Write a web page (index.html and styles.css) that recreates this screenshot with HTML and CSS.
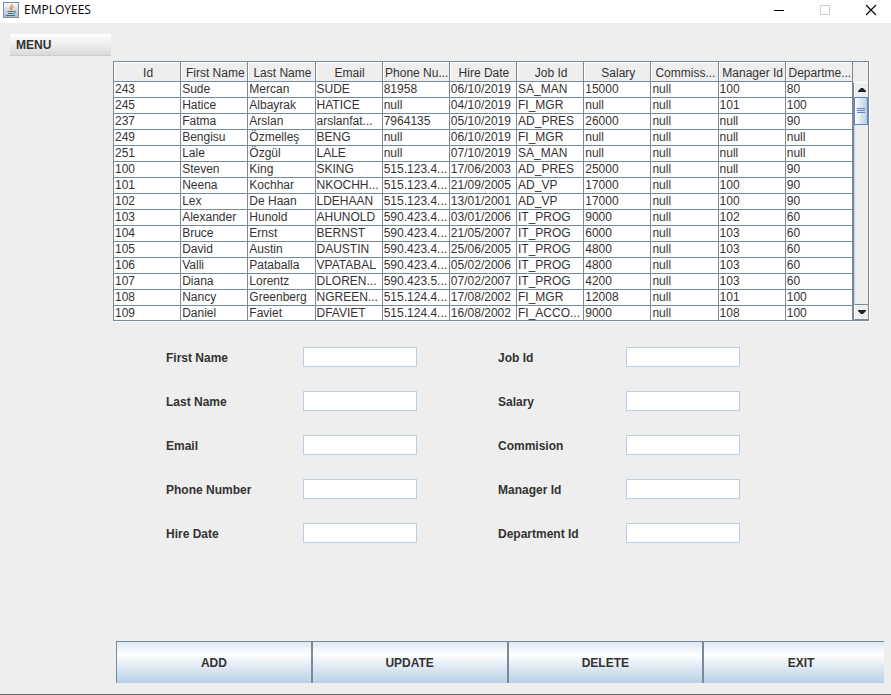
FILE: index.html
```html
<!DOCTYPE html>
<html lang="en">
<head>
<meta charset="utf-8">
<title>EMPLOYEES</title>
<link rel="stylesheet" href="styles.css">
</head>
<body>
<header class="titlebar">
  <svg class="app-icon" width="16" height="16" viewBox="0 0 16 16" aria-hidden="true">
    <defs><linearGradient id="tile" x1="0" y1="0" x2="0" y2="1"><stop offset="0" stop-color="#fafcfd"/><stop offset="1" stop-color="#a9bccb"/></linearGradient></defs>
    <rect x=".5" y=".5" width="15" height="15" fill="url(#tile)" stroke="#7790a5"/>
    <path d="M8.800 2C9.500 4 5.600 5 7.800 8M10.500 4.500C8.500 5.500 8.600 6.500 9 8" fill="none" stroke="#ed8a3a" stroke-width="1.300"/>
    <path d="M4.500 9.500H10.500M5 11.500H10M3 13.500H12M10.500 9.500C13.500 8.500 13 11 10.500 11.500" fill="none" stroke="#41708f"/>
  </svg>
  <h1 class="title">EMPLOYEES</h1>
  <div class="window-controls">
    <button class="window-button" type="button" aria-label="Minimize"><svg width="12" height="12" viewBox="0 0 12 12"><path d="M1 6.500H11" stroke="#000"/></svg></button>
    <button class="window-button" type="button" aria-label="Maximize" disabled><svg width="12" height="12" viewBox="0 0 12 12"><path d="M1.500 1.500H10.500V10.500H1.500Z" fill="none" stroke="#ccc"/></svg></button>
    <button class="window-button" type="button" aria-label="Close"><svg width="12" height="12" viewBox="0 0 12 12"><path d="M1 1L11 11M11 1L1 11" stroke="#000" stroke-width="1.100"/></svg></button>
  </div>
</header>
<main class="content">
  <div class="workspace">
    <nav class="menubar"><button class="menu" type="button">MENU</button></nav>
    <div class="scroll-pane">
      <div class="viewport">
        <table class="employees">
          <thead><tr><th>Id</th><th>First Name</th><th>Last Name</th><th>Email</th><th>Phone Nu...</th><th>Hire Date</th><th>Job Id</th><th>Salary</th><th>Commiss...</th><th>Manager Id</th><th>Departme...</th></tr></thead>
          <tbody>
            <tr><td>243</td><td>Sude</td><td>Mercan</td><td>SUDE</td><td>81958</td><td>06/10/2019</td><td>SA_MAN</td><td>15000</td><td>null</td><td>100</td><td>80</td></tr>
            <tr><td>245</td><td>Hatice</td><td>Albayrak</td><td>HATICE</td><td>null</td><td>04/10/2019</td><td>FI_MGR</td><td>null</td><td>null</td><td>101</td><td>100</td></tr>
            <tr><td>237</td><td>Fatma</td><td>Arslan</td><td>arslanfat...</td><td>7964135</td><td>05/10/2019</td><td>AD_PRES</td><td>26000</td><td>null</td><td>null</td><td>90</td></tr>
            <tr><td>249</td><td>Bengisu</td><td>Özmelleş</td><td>BENG</td><td>null</td><td>06/10/2019</td><td>FI_MGR</td><td>null</td><td>null</td><td>null</td><td>null</td></tr>
            <tr><td>251</td><td>Lale</td><td>Özgül</td><td>LALE</td><td>null</td><td>07/10/2019</td><td>SA_MAN</td><td>null</td><td>null</td><td>null</td><td>null</td></tr>
            <tr><td>100</td><td>Steven</td><td>King</td><td>SKING</td><td>515.123.4...</td><td>17/06/2003</td><td>AD_PRES</td><td>25000</td><td>null</td><td>null</td><td>90</td></tr>
            <tr><td>101</td><td>Neena</td><td>Kochhar</td><td>NKOCHH...</td><td>515.123.4...</td><td>21/09/2005</td><td>AD_VP</td><td>17000</td><td>null</td><td>100</td><td>90</td></tr>
            <tr><td>102</td><td>Lex</td><td>De Haan</td><td>LDEHAAN</td><td>515.123.4...</td><td>13/01/2001</td><td>AD_VP</td><td>17000</td><td>null</td><td>100</td><td>90</td></tr>
            <tr><td>103</td><td>Alexander</td><td>Hunold</td><td>AHUNOLD</td><td>590.423.4...</td><td>03/01/2006</td><td>IT_PROG</td><td>9000</td><td>null</td><td>102</td><td>60</td></tr>
            <tr><td>104</td><td>Bruce</td><td>Ernst</td><td>BERNST</td><td>590.423.4...</td><td>21/05/2007</td><td>IT_PROG</td><td>6000</td><td>null</td><td>103</td><td>60</td></tr>
            <tr><td>105</td><td>David</td><td>Austin</td><td>DAUSTIN</td><td>590.423.4...</td><td>25/06/2005</td><td>IT_PROG</td><td>4800</td><td>null</td><td>103</td><td>60</td></tr>
            <tr><td>106</td><td>Valli</td><td>Pataballa</td><td>VPATABAL</td><td>590.423.4...</td><td>05/02/2006</td><td>IT_PROG</td><td>4800</td><td>null</td><td>103</td><td>60</td></tr>
            <tr><td>107</td><td>Diana</td><td>Lorentz</td><td>DLOREN...</td><td>590.423.5...</td><td>07/02/2007</td><td>IT_PROG</td><td>4200</td><td>null</td><td>103</td><td>60</td></tr>
            <tr><td>108</td><td>Nancy</td><td>Greenberg</td><td>NGREEN...</td><td>515.124.4...</td><td>17/08/2002</td><td>FI_MGR</td><td>12008</td><td>null</td><td>101</td><td>100</td></tr>
            <tr><td>109</td><td>Daniel</td><td>Faviet</td><td>DFAVIET</td><td>515.124.4...</td><td>16/08/2002</td><td>FI_ACCO...</td><td>9000</td><td>null</td><td>108</td><td>100</td></tr>
          </tbody>
        </table>
      </div>
      <div class="scroll-side">
        <div class="corner"></div>
        <div class="scrollbar">
          <button class="arrow" type="button" aria-label="Scroll up"><svg width="8" height="4" viewBox="0 0 8 4"><path d="M0 4V3L3 0H5L8 3V4Z" fill="#222"/></svg></button>
          <div class="thumb"></div>
          <div class="track"></div>
          <button class="arrow arrow-down" type="button" aria-label="Scroll down"><svg width="8" height="4" viewBox="0 0 8 4"><path d="M0 0V1L3 4H5L8 1V0Z" fill="#222"/></svg></button>
        </div>
      </div>
    </div>
  </div>
  <form class="form">
    <label for="first">First Name</label><input id="first" type="text">
    <label class="second" for="job">Job Id</label><input id="job" type="text">
    <label for="last">Last Name</label><input id="last" type="text">
    <label class="second" for="salary">Salary</label><input id="salary" type="text">
    <label for="email">Email</label><input id="email" type="text">
    <label class="second" for="commission">Commision</label><input id="commission" type="text">
    <label for="phone">Phone Number</label><input id="phone" type="text">
    <label class="second" for="manager">Manager Id</label><input id="manager" type="text">
    <label for="hire">Hire Date</label><input id="hire" type="text">
    <label class="second" for="department">Department Id</label><input id="department" type="text">
  </form>
  <div class="action-clip">
    <div class="actions">
      <button type="button">ADD</button>
      <button type="button">UPDATE</button>
      <button type="button">DELETE</button>
      <button type="button">EXIT</button>
    </div>
  </div>
</main>
</body>
</html>
```
FILE: styles.css
```css
* { box-sizing: border-box; }
body {
  margin: 0;
  min-height: 100vh;
  display: flex;
  flex-direction: column;
  background: #eee;
  color: #333;
  font: 12px/14px "Liberation Sans", Arial, sans-serif;
  border-bottom: 1px solid #666;
}
button { font: inherit; color: inherit; padding: 0; border: 0; background: none; }
.titlebar {
  display: flex;
  align-items: center;
  height: 23px;
  padding-left: 3px;
  padding-bottom: 3px;
  background: #fff;
}
.title {
  margin: 0 auto 0 5px;
  color: #000;
  font: 12px/16px "Open Sans", "Noto Sans", sans-serif;
}
.window-controls { display: flex; margin-right: -3px; }
.window-button {
  display: flex;
  align-items: center;
  justify-content: center;
  width: 46px;
  height: 20px;
}
.content {
  flex: 1;
  display: flex;
  flex-direction: column;
  padding: 11px 0;
}
.workspace { display: flex; align-items: flex-start; padding: 0 22px 0 10px; }
.menubar { flex: 0 0 101px; margin-right: 2px; }
.menu {
  width: 100%;
  height: 22px;
  padding: 0 6px;
  border-bottom: 1px solid #ccc;
  background: linear-gradient(#fff, #dadada);
  font-weight: bold;
  text-align: left;
}
.scroll-pane {
  flex: 1;
  display: flex;
  min-width: 0;
  margin-top: 27px;
  border: 1px solid #7a8a99;
  border-right: 0;
  box-shadow: 1px 1px #fff;
}
.viewport { flex: 1; min-width: 0; overflow: hidden; }
.employees {
  width: 100%;
  table-layout: fixed;
  border-spacing: 0;
  margin-bottom: -2px;
  background: #fff;
}
.employees th, .employees td {
  padding: 0 0 0 1px;
  border-right: 1px solid #7a8a99;
  border-bottom: 1px solid #7a8a99;
  overflow: hidden;
  white-space: nowrap;
  font-weight: normal;
  text-align: left;
}
.employees td { height: 16px; vertical-align: top; }
.employees th {
  height: 20px;
  padding: 2px 0 0 2px;
  background: #eee;
  box-shadow: inset 1px 1px #fff;
  text-align: center;
}
.scroll-side {
  flex: 0 0 16px;
  display: flex;
  flex-direction: column;
  border-right: 1px solid #7a8a99;
}
.corner { height: 20px; }
.scrollbar {
  flex: 1;
  display: flex;
  flex-direction: column;
  border-left: 1px solid #7a8a99;
  border-top: 1px solid #fff;
}
.arrow {
  display: flex;
  align-items: center;
  justify-content: center;
  height: 14px;
  border-left: 1px solid #fff;
}
.arrow-down { height: 16px; border-top: 1px solid #7a8a99; border-bottom: 1px solid #7a8a99; }
.thumb {
  height: 28px;
  padding: 10px 2px 0;
  border: 1px solid #6382bf;
  background: linear-gradient(90deg, #fff, #b8cfe5);
}
.thumb::before {
  content: "";
  display: block;
  height: 5px;
  background: repeating-linear-gradient(#6382bf 0 1px, transparent 1px 2px);
}
.track { flex: 1; border-left: 1px solid #b8cfe5; }
.form {
  display: grid;
  grid-template-columns: 137px 114px 209px 114px;
  row-gap: 24px;
  align-items: center;
  margin: 26px 0 24px 166px;
  font-weight: bold;
}
.form label { padding-top: 2px; }
.form .second { margin-left: 81px; }
.form input {
  width: 100%;
  height: 20px;
  padding: 0 2px;
  border: 1px solid #b8cfe5;
  background: #fff;
  font: inherit;
}
.action-clip { margin: auto 7px 0 116px; overflow: hidden; }
.actions {
  display: grid;
  grid-template-columns: repeat(4, 1fr);
  margin-right: -15px;
}
.actions button {
  height: 42px;
  border: 1px solid #7a8a99;
  border-bottom: 0;
  background: linear-gradient(#dde8f3, #fff 30%, #b8cfe5);
  font-weight: bold;
}
```
